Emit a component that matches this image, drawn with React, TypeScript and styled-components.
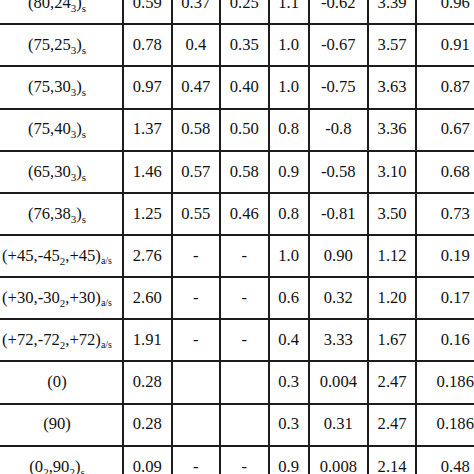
import React, { FC } from "react";
import styled, { createGlobalStyle } from "styled-components";

const GlobalStyle = createGlobalStyle`
  html, body {
    margin: 0;
    padding: 0;
    background: #ffffff;
  }
  body {
    font-family: "Liberation Serif", "Times New Roman", serif;
    color: #111;
  }
`;

type Label = { main: string; sub?: string; tail?: string; end: string };

type Row = { label: Label; values: string[] };

const rows: Row[] = [
  { label: { main: "(80,24", sub: "3", tail: ")", end: "s" }, values: ["0.59", "0.37", "0.25", "1.1", "-0.62", "3.39", "0.96"] },
  { label: { main: "(75,25", sub: "3", tail: ")", end: "s" }, values: ["0.78", "0.4", "0.35", "1.0", "-0.67", "3.57", "0.91"] },
  { label: { main: "(75,30", sub: "3", tail: ")", end: "s" }, values: ["0.97", "0.47", "0.40", "1.0", "-0.75", "3.63", "0.87"] },
  { label: { main: "(75,40", sub: "3", tail: ")", end: "s" }, values: ["1.37", "0.58", "0.50", "0.8", "-0.8", "3.36", "0.67"] },
  { label: { main: "(65,30", sub: "3", tail: ")", end: "s" }, values: ["1.46", "0.57", "0.58", "0.9", "-0.58", "3.10", "0.68"] },
  { label: { main: "(76,38", sub: "3", tail: ")", end: "s" }, values: ["1.25", "0.55", "0.46", "0.8", "-0.81", "3.50", "0.73"] },
  { label: { main: "(+45,-45", sub: "2", tail: ",+45)", end: "a/s" }, values: ["2.76", "-", "-", "1.0", "0.90", "1.12", "0.19"] },
  { label: { main: "(+30,-30", sub: "2", tail: ",+30)", end: "a/s" }, values: ["2.60", "-", "-", "0.6", "0.32", "1.20", "0.17"] },
  { label: { main: "(+72,-72", sub: "2", tail: ",+72)", end: "a/s" }, values: ["1.91", "-", "-", "0.4", "3.33", "1.67", "0.16"] },
  { label: { main: "(0)", end: "" }, values: ["0.28", "", "", "0.3", "0.004", "2.47", "0.186"] },
  { label: { main: "(90)", end: "" }, values: ["0.28", "", "", "0.3", "0.31", "2.47", "0.186"] },
  { label: { main: "(0", sub: "2", tail: ",90", end: "s" }, values: ["0.09", "-", "-", "0.9", "0.008", "2.14", "0.48"] },
];

const colWidths = [132, 48.7, 48.3, 48.7, 40, 59.3, 48.3, 78];

const Frame = styled.div`
  width: 474px;
  height: 474px;
  overflow: hidden;
  background: #fff;
`;

const Table = styled.table`
  border-collapse: collapse;
  table-layout: fixed;
  margin-top: -18.8px;
  margin-left: -10px;
  width: ${colWidths.reduce((a, b) => a + b, 0)}px;
`;

const Cell = styled.td`
  border: 2px solid #1c1c1c;
  height: 40.15px;
  padding: 0;
  text-align: center;
  vertical-align: middle;
  font-size: 16.6px;
  line-height: 1;
  white-space: nowrap;
  overflow: hidden;
`;

const Sub = styled.span<{ $small?: boolean }>`
  font-size: ${(p) => (p.$small ? "10px" : "11px")};
  line-height: 0;
  vertical-align: -0.32em;
`;

const LabelText: FC<{ label: Label }> = ({ label }) => {
  // the (0₂,90₂)s row carries a second subscript before the closing paren
  const isLast = label.main === "(0";
  return (
    <>
      {label.main}
      {label.sub && <Sub>{label.sub}</Sub>}
      {label.tail}
      {isLast && <Sub>2</Sub>}
      {isLast && ")"}
      {label.end && <Sub $small={label.end === "a/s"}>{label.end}</Sub>}
    </>
  );
};

const App: FC = () => {
  return (
    <>
      <GlobalStyle />
      <Frame>
        <Table>
          <colgroup>
            {colWidths.map((w, i) => (
              <col key={i} style={{ width: w }} />
            ))}
          </colgroup>
          <tbody>
            {rows.map((row, i) => (
              <tr key={i}>
                <Cell>
                  <LabelText label={row.label} />
                </Cell>
                {row.values.map((v, j) => (
                  <Cell key={j}>{v}</Cell>
                ))}
              </tr>
            ))}
          </tbody>
        </Table>
      </Frame>
    </>
  );
};

export default App;
